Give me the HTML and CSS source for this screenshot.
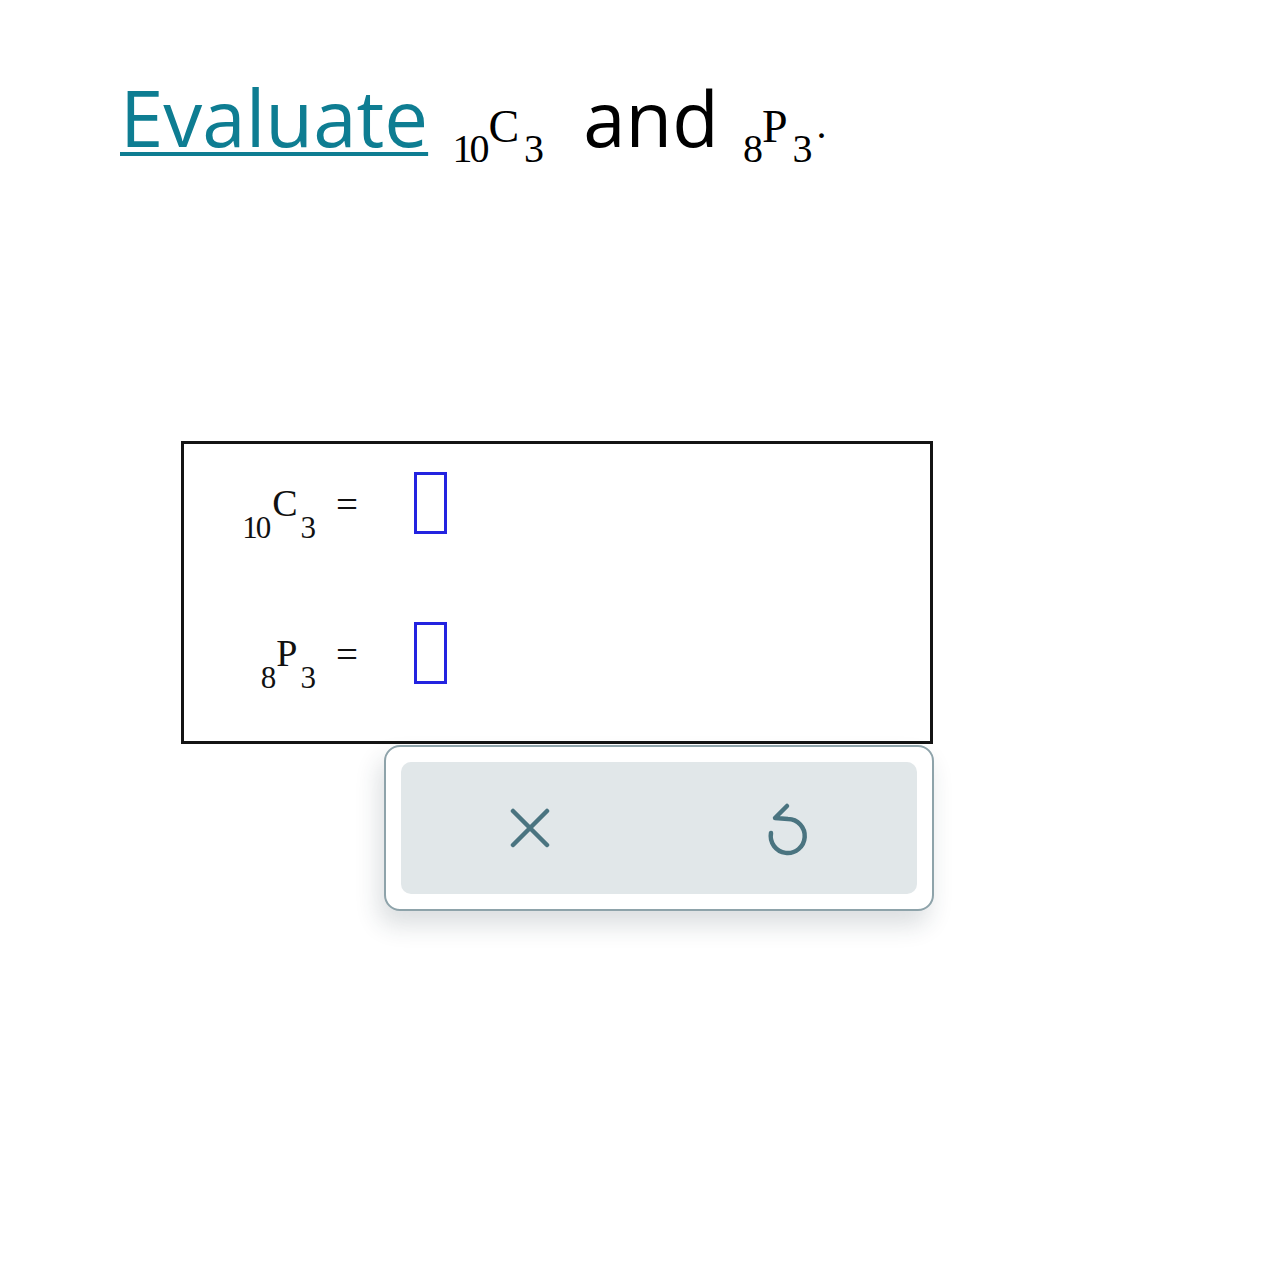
FILE: index.html
```html
<!DOCTYPE html>
<html>
<head>
<meta charset="utf-8">
<link rel="stylesheet" href="styles.css">
</head>
<body>
<div class="page">
  <h1 class="title"><a class="link" href="#">Evaluate</a> <span class="hm"><span class="hsub pre">10</span><span class="hbase">C</span><span class="hsub post">3</span></span> <span class="and">and</span> <span class="hm"><span class="hsub pre">8</span><span class="hbase">P</span><span class="hsub post">3</span><span class="hdot">.</span></span></h1>

  <div class="panel">
    <div class="row">
      <div class="expr"><span class="sub ten">10</span><span class="base">C</span><span class="sub post">3</span><span class="eq">=</span></div>
      <div class="answer"></div>
    </div>
    <div class="row">
      <div class="expr"><span class="sub">8</span><span class="base">P</span><span class="sub post">3</span><span class="eq">=</span></div>
      <div class="answer"></div>
    </div>
  </div>

  <div class="toolbar-wrap">
    <div class="toolbar">
      <div class="tools">
        <button class="tool" aria-label="Clear">
          <svg width="40" height="40" viewBox="0 0 40 40"><path d="M3 3 L37 37 M37 3 L3 37" fill="none" stroke="#4a7480" stroke-width="4.5" stroke-linecap="round"/></svg>
        </button>
        <button class="tool" aria-label="Undo">
          <svg width="56" height="60" viewBox="0 0 56 60"><path d="M11 33 A17 17 0 1 0 28 19 L15 18 L27 6" fill="none" stroke="#4a7480" stroke-width="4.5" stroke-linecap="round" stroke-linejoin="round"/></svg>
        </button>
      </div>
    </div>
  </div>
</div>
</body>
</html>
```

FILE: styles.css
```css
html, body {
  margin: 0;
  padding: 0;
  background: #ffffff;
}

.page {
  padding: 72px 0 200px 120px;
  font-family: "Open Sans", "Liberation Sans", sans-serif;
}

.title {
  margin: 0;
  font-size: 78px;
  font-weight: 400;
  line-height: 90px;
  height: 90px;
  color: #000;
  white-space: nowrap;
}

.link {
  color: #0e7d92;
  text-decoration: underline;
  text-decoration-thickness: 4px;
  text-underline-offset: 5px;
}

.and {
  font-size: 76px;
  margin-left: 19px;
}

.hm {
  font-family: "Liberation Serif", "Times New Roman", serif;
  line-height: 0;
}

.hbase {
  font-size: 46px;
  vertical-align: 5px;
  line-height: 0;
}

.hsub {
  font-size: 40px;
  vertical-align: -15px;
  line-height: 0;
}

.hsub.pre {
  margin-left: 4px;
  margin-right: 2px;
  letter-spacing: -3px;
}

.hsub.post {
  margin-left: 5px;
}

.hdot {
  font-size: 40px;
  vertical-align: 9px;
  line-height: 0;
  margin-left: 4px;
}

.panel {
  margin: 279px 0 0 61px;
  width: 752px;
  height: 303px;
  box-sizing: border-box;
  border: 3px solid #141414;
  display: grid;
  grid-template-rows: 150px 1fr;
}

.row {
  display: flex;
  align-items: flex-start;
  padding-top: 28px;
}

.expr {
  width: 174px;
  text-align: right;
  font-family: "Liberation Serif", "Times New Roman", serif;
  font-size: 39px;
  line-height: 62px;
  height: 62px;
  white-space: nowrap;
  color: #111;
}

.base {
  font-size: 38px;
}

.sub {
  font-size: 31px;
  line-height: 1;
  vertical-align: -22px;
}

.sub.ten {
  letter-spacing: -2px;
  margin-right: 3px;
}

.sub.post {
  margin-left: 3px;
}

.eq {
  display: inline-block;
  margin-left: 20px;
  width: 22px;
  text-align: left;
  vertical-align: -2px;
  line-height: 1;
}

.answer {
  margin-left: 56px;
  width: 33px;
  height: 62px;
  box-sizing: border-box;
  border: 3px solid #2323e0;
}

.toolbar-wrap {
  width: 753px;
  margin-left: 61px;
  display: flex;
  justify-content: flex-end;
  margin-top: 1px;
}

.toolbar {
  width: 550px;
  height: 166px;
  box-sizing: border-box;
  border: 2px solid #8ea3aa;
  border-radius: 16px;
  background: #fff;
  padding: 15px;
  box-shadow: -5px 14px 24px rgba(30, 50, 60, 0.16);
}

.tools {
  height: 100%;
  background: #e1e7e9;
  border-radius: 10px;
  display: grid;
  grid-template-columns: 1fr 1fr;
}

.tool {
  border: 0;
  background: transparent;
  padding: 0;
  display: flex;
  align-items: center;
  justify-content: center;
  cursor: pointer;
}

.tool svg {
  display: block;
}

.tool:last-child svg {
  margin-top: 4px;
}
```
